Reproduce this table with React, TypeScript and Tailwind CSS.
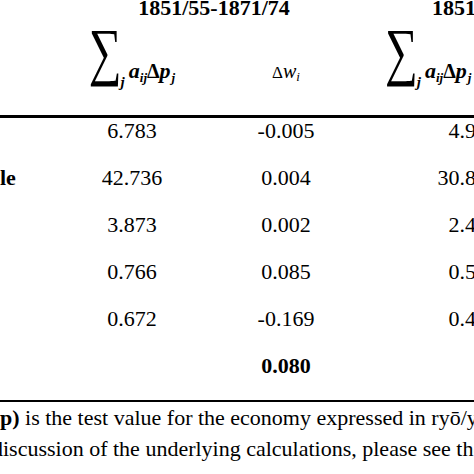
import React from "react";

type Row = {
  label?: string;
  a: string;
  b: string;
  c: string;
  bold?: boolean;
};

const rows: Row[] = [
  { a: "6.783", b: "-0.005", c: "4.9" },
  { label: "le", a: "42.736", b: "0.004", c: "30.8" },
  { a: "3.873", b: "0.002", c: "2.4" },
  { a: "0.766", b: "0.085", c: "0.5" },
  { a: "0.672", b: "-0.169", c: "0.4" },
  { a: "", b: "0.080", c: "", bold: true },
];

const SumFormula = () => {
  return (
    <span className="whitespace-nowrap leading-[22px]">
      <span className="inline-block text-[46px] leading-[0] scale-y-[1.4] align-[11px]">∑</span>
      <span className="-ml-[1px] font-bold italic text-[15px] align-[-9px] leading-[0]">j</span>
      <span className="ml-[4px] font-bold italic text-[22px]">a</span>
      <span className="font-bold italic text-[13px] align-[-4px] leading-[0]">ij</span>
      <span className="font-bold text-[20px]">Δ</span>
      <span className="font-bold italic text-[22px]">p</span>
      <span className="ml-[1px] font-bold italic text-[13px] align-[-4px] leading-[0]">j</span>
    </span>
  );
};

const DeltaW = () => {
  return (
    <span className="whitespace-nowrap leading-[22px]">
      <span className="text-[17px]">Δ</span>
      <span className="italic text-[20px]">w</span>
      <span className="italic text-[13px] align-[-3px] leading-[0]">i</span>
    </span>
  );
};

export default function App() {
  return (
    <div className="w-[474px] h-[474px] overflow-hidden bg-white text-black font-['Liberation_Serif',serif] text-[22px]">
      <div className="grid grid-cols-[60px_144px_164px_108px]">
        {/* header: periods */}
        <div className="col-start-2 col-span-2 text-center font-bold leading-[16px] whitespace-nowrap">
          1851/55-1871/74
        </div>
        <div className="pl-[64px] font-bold leading-[16px] whitespace-nowrap">1851/55-1871/74</div>

        {/* header: formulas */}
        <div className="h-[99px]" />
        <div className="h-[99px] pt-[36px] text-center">
          <SumFormula />
        </div>
        <div className="h-[99px] pt-[38px] text-center">
          <DeltaW />
        </div>
        <div className="h-[99px] pt-[36px] pl-[17px] whitespace-nowrap">
          <SumFormula />
        </div>

        <div className="col-span-4 h-[3px] bg-black" />

        {rows.map((r, i) => (
          <React.Fragment key={i}>
            <div className="h-[47px] pt-[2px] leading-[22px] font-bold whitespace-nowrap">{r.label}</div>
            <div className="h-[47px] pt-[2px] leading-[22px] text-center">{r.a}</div>
            <div className={`h-[47px] pt-[2px] leading-[22px] text-center ${r.bold ? "font-bold" : ""}`}>{r.b}</div>
            <div className="h-[47px] pt-[2px] leading-[22px] text-right whitespace-nowrap">{r.c}</div>
          </React.Fragment>
        ))}

        <div className="col-span-4 h-[2px] bg-black" />
      </div>

      <div className="leading-[31px] whitespace-nowrap">
        <div>
          <span className="font-bold">p)</span> is the test value for the economy expressed in ryō/year
        </div>
        <div className="-ml-[8px]">discussion of the underlying calculations, please see the</div>
      </div>
    </div>
  );
}
